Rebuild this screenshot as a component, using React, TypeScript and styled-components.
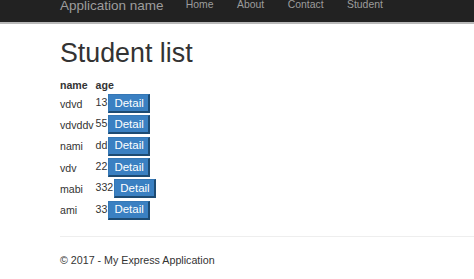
import React from "react";
import styled, { createGlobalStyle } from "styled-components";

const GlobalStyle = createGlobalStyle`
  html, body {
    margin: 0;
    padding: 0;
    background: #ffffff;
  }
  body {
    font-family: "Liberation Sans", Arial, Helvetica, sans-serif;
    font-size: 10.6px;
    color: #333333;
    overflow: hidden;
  }
`;

const Navbar = styled.nav`
  display: flex;
  align-items: flex-start;
  height: 22px;
  padding-left: 60px;
  background: #222222;
  border-bottom: 2px solid #b9b9b9;
  overflow: hidden;
`;

const Brand = styled.a`
  font-size: 13.5px;
  line-height: 13px;
  margin-top: -1.2px;
  margin-right: 10.5px;
  color: #9d9d9d;
  text-decoration: none;
  white-space: nowrap;
`;

const NavLink = styled.a`
  font-size: 10.4px;
  line-height: 10px;
  padding: 0 11.75px;
  color: #9d9d9d;
  text-decoration: none;
  white-space: nowrap;
`;

const Container = styled.main`
  padding-left: 60px;
`;

const Title = styled.h1`
  margin: 14.6px 0 8.9px 0;
  font-size: 26.8px;
  line-height: 1.1;
  font-weight: 400;
  color: #333333;
`;

const Table = styled.table`
  border-collapse: separate;
  border-spacing: 0;
`;

const HeadCell = styled.th<{ $first?: boolean }>`
  height: 16.1px;
  padding: 0 ${(p) => (p.$first ? "2px" : "0")} 0 0;
  text-align: left;
  font-weight: 700;
  line-height: 14px;
  vertical-align: middle;
`;

const Cell = styled.td<{ $first?: boolean }>`
  height: 21.3px;
  padding: 0 ${(p) => (p.$first ? "2px" : "0")} 0 0;
  line-height: 14px;
  vertical-align: middle;
  white-space: nowrap;
`;

const DetailButton = styled.button`
  display: inline-block;
  vertical-align: middle;
  height: 19px;
  margin-left: 1px;
  padding: 0 4px 0 5px;
  font-family: "Liberation Sans", Arial, Helvetica, sans-serif;
  font-size: 11.5px;
  line-height: 15px;
  color: #ffffff;
  background: #3a80c2;
  border-style: solid;
  border-width: 1px 2px 2px 1px;
  border-color: #3577b5 #1d4b73 #1d4b73 #3577b5;
  border-radius: 0;
  cursor: pointer;
`;

const Rule = styled.hr`
  margin: 15px 0 0 0;
  border: 0;
  border-top: 1px solid #eeeeee;
`;

const Footer = styled.footer`
  margin-top: 15.8px;
  line-height: 15px;
  font-size: 10.7px;
`;

const students = [
  { name: "vdvd", age: "13" },
  { name: "vdvddv", age: "55" },
  { name: "nami", age: "dd" },
  { name: "vdv", age: "22" },
  { name: "mabi", age: "332" },
  { name: "ami", age: "33" },
];

export default function App() {
  return (
    <>
      <GlobalStyle />
      <Navbar>
        <Brand href="#">Application name</Brand>
        <NavLink href="#">Home</NavLink>
        <NavLink href="#">About</NavLink>
        <NavLink href="#">Contact</NavLink>
        <NavLink href="#">Student</NavLink>
      </Navbar>
      <Container>
        <Title>Student list</Title>
        <Table>
          <thead>
            <tr>
              <HeadCell $first>name</HeadCell>
              <HeadCell>age</HeadCell>
            </tr>
          </thead>
          <tbody>
            {students.map((s) => (
              <tr key={s.name}>
                <Cell $first>{s.name}</Cell>
                <Cell>
                  {s.age}
                  <DetailButton>Detail</DetailButton>
                </Cell>
              </tr>
            ))}
          </tbody>
        </Table>
        <Rule />
        <Footer>© 2017 - My Express Application</Footer>
      </Container>
    </>
  );
}
